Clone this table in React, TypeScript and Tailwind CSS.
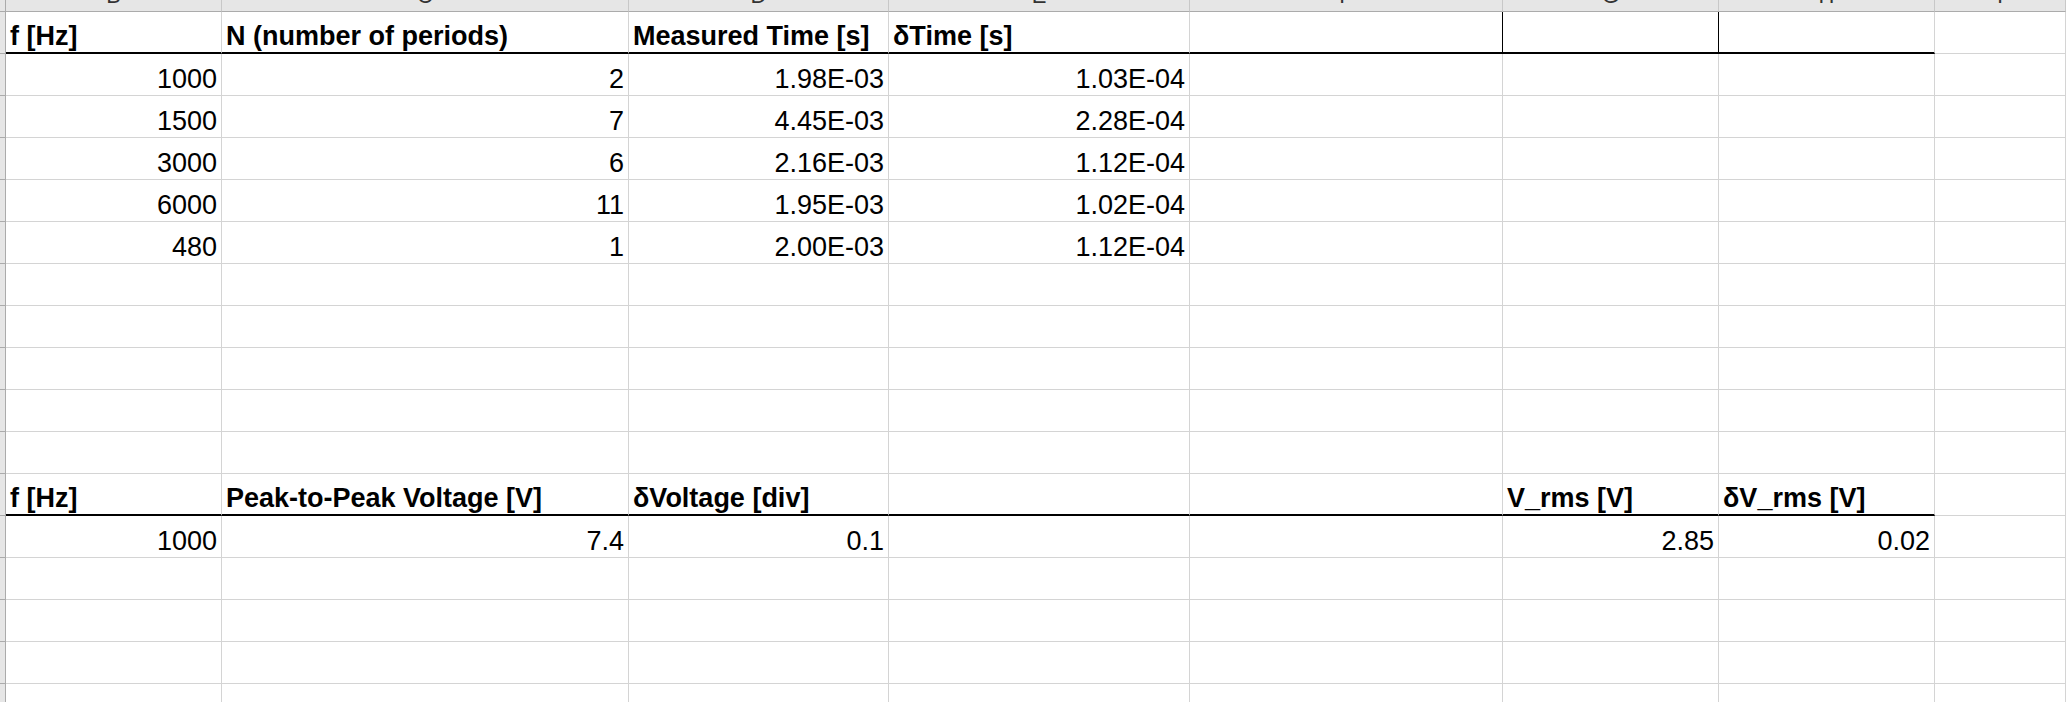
import React from "react";

type Cell = { t?: string; b?: boolean; r?: boolean };

const LETTERS = ["", "B", "C", "D", "E", "F", "G", "H", "I"];

const rows: Cell[][] = [
  [
    { t: "f [Hz]", b: true },
    { t: "N (number of periods)", b: true },
    { t: "Measured Time [s]", b: true },
    { t: "δTime [s]", b: true },
    {},
    {},
    {},
    {},
  ],
  [{ t: "1000", r: true }, { t: "2", r: true }, { t: "1.98E-03", r: true }, { t: "1.03E-04", r: true }, {}, {}, {}, {}],
  [{ t: "1500", r: true }, { t: "7", r: true }, { t: "4.45E-03", r: true }, { t: "2.28E-04", r: true }, {}, {}, {}, {}],
  [{ t: "3000", r: true }, { t: "6", r: true }, { t: "2.16E-03", r: true }, { t: "1.12E-04", r: true }, {}, {}, {}, {}],
  [{ t: "6000", r: true }, { t: "11", r: true }, { t: "1.95E-03", r: true }, { t: "1.02E-04", r: true }, {}, {}, {}, {}],
  [{ t: "480", r: true }, { t: "1", r: true }, { t: "2.00E-03", r: true }, { t: "1.12E-04", r: true }, {}, {}, {}, {}],
  [{}, {}, {}, {}, {}, {}, {}, {}],
  [{}, {}, {}, {}, {}, {}, {}, {}],
  [{}, {}, {}, {}, {}, {}, {}, {}],
  [{}, {}, {}, {}, {}, {}, {}, {}],
  [{}, {}, {}, {}, {}, {}, {}, {}],
  [
    { t: "f [Hz]", b: true },
    { t: "Peak-to-Peak Voltage [V]", b: true },
    { t: "δVoltage [div]", b: true },
    {},
    {},
    { t: "V_rms [V]", b: true },
    { t: "δV_rms [V]", b: true },
    {},
  ],
  [{ t: "1000", r: true }, { t: "7.4", r: true }, { t: "0.1", r: true }, {}, {}, { t: "2.85", r: true }, { t: "0.02", r: true }, {}],
  [{}, {}, {}, {}, {}, {}, {}, {}],
  [{}, {}, {}, {}, {}, {}, {}, {}],
  [{}, {}, {}, {}, {}, {}, {}, {}],
  [{}, {}, {}, {}, {}, {}, {}, {}],
];

const THICK_ROWS = [0, 11];

export default function App() {
  return (
    <div
      className="w-[2066px] h-[702px] overflow-hidden bg-white text-black"
      style={{ fontFamily: '"Liberation Sans", Arial, sans-serif' }}
    >
      <div className="grid grid-cols-[6px_216px_407px_260px_301px_313px_216px_216px_1fr]">
        {LETTERS.map((l, i) => (
          <div
            key={"h" + i}
            className={
              i === 0
                ? "h-[12px] bg-[#e6e6e6] border-r border-b border-[#ababab]"
                : "h-[12px] bg-[#e6e6e6] border-r border-b border-r-[#c8c8c8] border-b-[#ababab] overflow-hidden flex justify-center"
            }
          >
            {l && (
              <span className="text-[22px] leading-[22px] mt-[-15px] text-[#333]">{l}</span>
            )}
          </div>
        ))}
        {rows.map((row, ri) => {
          const thick = THICK_ROWS.includes(ri);
          return (
            <React.Fragment key={ri}>
              <div className="h-[42px] bg-[#e6e6e6] border-r border-b border-[#ababab]" />
              {row.map((c, ci) => {
                const blackRight = ri === 0 && (ci === 4 || ci === 5);
                let cls =
                  "h-[42px] flex items-end px-[4px] whitespace-nowrap overflow-visible border-r border-b text-[27px] leading-[32px]";
                if (ci === 7) {
                  cls += " border-[#d4d4d4]";
                } else if (thick) {
                  cls += blackRight
                    ? " border-r-black border-b-2 border-b-black"
                    : " border-r-[#d4d4d4] border-b-2 border-b-black";
                } else {
                  cls += " border-[#d4d4d4]";
                }
                cls += c.r ? " justify-end" : " justify-start";
                cls += c.b ? " font-bold" : " font-normal";
                return (
                  <div key={ci} className={cls}>
                    {c.t ? <span>{c.t}</span> : null}
                  </div>
                );
              })}
            </React.Fragment>
          );
        })}
      </div>
    </div>
  );
}
